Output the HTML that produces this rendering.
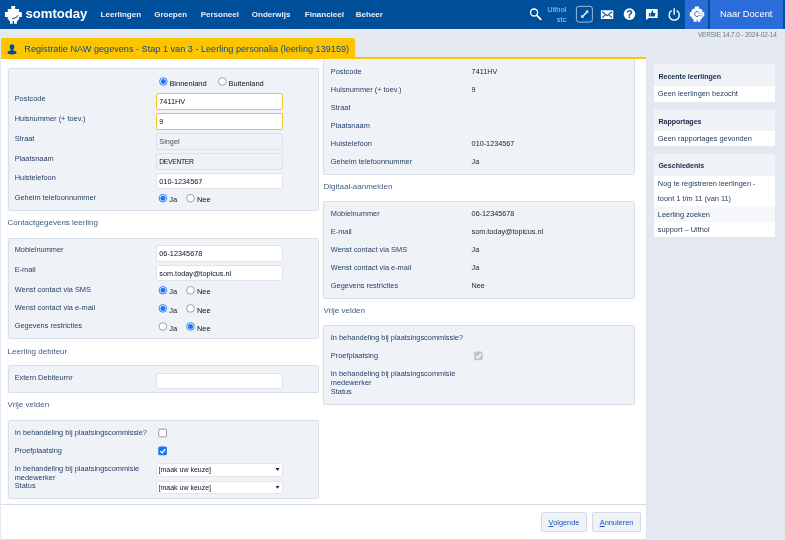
<!DOCTYPE html>
<html lang="nl">
<head>
<meta charset="utf-8">
<title>Somtoday - Registratie NAW gegevens</title>
<style>
*{box-sizing:border-box;margin:0;padding:0}
html,body{width:785px;height:540px;overflow:hidden}
body{will-change:transform;background:#e4e8f0;font-family:"Liberation Sans",sans-serif;color:#2b4468;position:relative;font-size:7.4px;-webkit-text-size-adjust:none}
#hdr{position:absolute;left:0;top:0;width:785px;height:28.5px;background:#004f9a}
#hdr .nav{position:absolute;top:9.5px;font-size:8px;font-weight:bold;color:#e8eef8;line-height:9px;white-space:nowrap}
#brand{position:absolute;left:25.5px;top:5.5px;font-size:13.1px;font-weight:bold;color:#fff;line-height:15px;letter-spacing:0}
#light{position:absolute;left:685px;top:0;width:98px;height:28.5px;background:#2a6cd8}
#sep{position:absolute;left:708px;top:0;width:1.6px;height:28.5px;background:#004f9a}
#naar{position:absolute;left:720px;top:8.900px;font-size:9.35px;color:#fff;line-height:11px;white-space:nowrap}
#user{position:absolute;left:516px;width:50.4px;top:5.400px;text-align:right;font-size:7.5px;line-height:9.300px;color:#aec4e8}
#versie{position:absolute;right:8.400px;top:31.200px;font-size:6.500px;letter-spacing:-0.156px;line-height:7px;color:#6b7a8d;white-space:nowrap}
#main{position:absolute;left:1px;top:58px;width:646px;height:482px;background:#fff;border-bottom:1px solid #d9dfe8;border-right:1px solid #dde2eb}
#yline{z-index:5;position:absolute;left:1px;top:57px;width:645px;height:2px;background:#fcc40a}
#tab{z-index:6;position:absolute;left:1px;top:38px;width:354.200px;height:21px;background:#fdc500;border-radius:2px 2px 0 0}
#tab span{position:absolute;left:23.3px;top:6.300px;font-size:9.150px;line-height:10px;color:#0a4a98;white-space:nowrap}
.panel{position:absolute;background:#eff2f6;border:1px solid #d8dfe8;border-radius:1.500px}
.h{position:absolute;font-size:8px;line-height:9px;color:#3f5d84;white-space:nowrap}
.l{position:absolute;font-size:7.4px;line-height:9px;color:#26406a;white-space:nowrap}
.v{position:absolute;font-size:7.250px;line-height:9px;color:#15202e;white-space:nowrap}
.in{position:absolute;left:156px;width:127px;height:16.500px;background:#fff;border:1px solid #dfe4ec;border-radius:2px;font-size:7.300px;line-height:9px;color:#0b111b;padding:3.200px 0 0 2.300px;white-space:nowrap}
.in.y{border-color:#f9c02c}
.in.d{background:#eff2f6;border-color:#dde2ea}
.in.d.g{color:#4a4f57}
.in.u{font-size:6.800px;letter-spacing:-0.350px;padding-top:3.400px}
.rl{position:absolute;font-size:7.450px;line-height:9px;color:#0e1520;white-space:nowrap}
.sb{position:absolute;left:654px;width:121px;background:#fff}
.sb .t{position:absolute;left:0;top:0;width:100%;height:21.6px;background:#eff2f6}
.sb b,.sb span{position:absolute;left:3.8px;font-size:7.4px;line-height:9px;white-space:nowrap;color:#1d3557}
.sb b{left:4.400px;color:#15294a;font-size:7.050px}
.btn{position:absolute;top:512.3px;height:20.2px;background:#eff2f6;border:1px solid #d3dae5;border-radius:1.5px;font-size:7.4px;line-height:9px;color:#1a55b5;text-align:center;padding-top:5.2px}
.btn u{text-decoration-thickness:0.6px;text-underline-offset:0.8px}
.sel{position:absolute;left:156px;width:127px;height:13.900px;background:#fff;border:1px solid #e1e6ed;border-radius:2px;font-size:7px;line-height:9px;color:#0e1520;padding:1.500px 0 0 1.500px;white-space:nowrap}
.fsep{position:absolute;left:1px;top:504px;width:645px;height:1px;background:#d5dce7}
.sb .alt{position:absolute;left:0;width:100%;background:#f5f7fa}
</style>
</head>
<body>
<div id="hdr">
  <div id="brand">somtoday</div>
  <div class="nav" style="left:100.6px">Leerlingen</div>
  <div class="nav" style="left:154.2px">Groepen</div>
  <div class="nav" style="left:200.7px">Personeel</div>
  <div class="nav" style="left:251.8px">Onderwijs</div>
  <div class="nav" style="left:304.8px">Financieel</div>
  <div class="nav" style="left:355.8px">Beheer</div>
  <div id="user">Uithol<br>stc</div>
  <div id="light"></div><div id="sep"></div>
  <div id="naar">Naar Docent</div>
<svg id="ico" width="785" height="29" viewBox="0 0 785 29" style="position:absolute;left:0;top:0">
  <!-- logo -->
  <path fill="#fff" d="M11.300 6h3.800v2.900h4v3.100h2.700v4.900h-2.700v2.900h-1.300v1.300h-.9v2.700h-2.900v-2.700h-1.300v2.700h-2.700v-2.700h-.9v-1.300h-1.300v-2.900h-2.900v-4.900h2.900v-3.100h3.500z"/>
  <path d="M12 18.600c2.800-.3 5-1.500 6.400-3.500c-1.200 2.400-3.600 3.900-6.400 3.500z" fill="#004f9a" stroke="#004f9a" stroke-width="0.5"/>
  <!-- search -->
  <circle cx="534.1" cy="12.5" r="3.55" fill="none" stroke="#fff" stroke-width="1.35"/>
  <path d="M536.800 15.3l4 4" stroke="#fff" stroke-width="1.800" stroke-linecap="round"/>
  <!-- expand -->
  <rect x="576.4" y="6.3" width="16" height="15.800" rx="2.6" fill="none" stroke="#c9d6ec" stroke-width="0.8"/>
  <path d="M582.500 16.400l4.200-4.200" stroke="#fff" stroke-width="1.400"/>
  <path fill="#fff" d="M588.200 10.600v2.900l-2.900-2.900zM581.200 17.700v-2.900l2.900 2.900z"/>
  <!-- mail -->
  <rect x="600.9" y="10.200" width="12.400" height="8.700" rx="0.600" fill="#fff"/>
  <path d="M602.200 11.700l4.900 3.900 4.900-3.900M602.200 17.700l3.500-3M612 17.700l-3.500-3" fill="none" stroke="#004f9a" stroke-width="1.100"/>
  <!-- help -->
  <circle cx="629.5" cy="14.150" r="5.800" fill="#fff"/>
  <text x="629.5" y="18" text-anchor="middle" font-family="Liberation Sans, sans-serif" font-weight="bold" font-size="10.800" fill="#004f9a">?</text>
  <!-- feedback -->
  <path fill="#fff" d="M646.600 9h10.500a.600.600 0 0 1 .6.600v7.900a.600.600 0 0 1-.6.600h-8.300l-2.800 2v-10.500a.600.600 0 0 1 .6-.600z"/>
  <path fill="#004f9a" d="M648.900 13h1.500v3.600h-1.500zM650.900 13l1.500-2.400c.8 0 1 .6.800 1.300l-.2 1h1.700c.5 0 .8.400.7.900l-.5 2.200c-.1.400-.4.600-.8.600h-3.200z"/>
  <!-- power -->
  <path d="M671.300 10.900a5.100 5.100 0 1 0 5.800 0" fill="none" stroke="#fff" stroke-width="1.300" stroke-linecap="round"/>
  <path d="M674.200 8.800v5.500" stroke="#fff" stroke-width="1.400" stroke-linecap="round"/>
  <!-- puzzle 2 -->
  <path fill="#fff" d="M694.800 6.500h4.200v2.300h1.900l1.500 1.500v1.600h1.800v4.500h-1.800v1.700l-1.500 1.500h-.6v2.200h-2.700v-2.100h-.9v2.100h-3.100v-2.200h-.4l-1.500-1.500v-1.700h-1.900v-4.500h1.900v-1.600l1.500-1.500h1.600z"/>
  <path d="M698.700 12.300a2.400 2.400 0 1 0 0 3.500" fill="none" stroke="#2a6cd8" stroke-width="1"/>
  <path d="M698.300 13.300h5.400M698.300 15.200h4.600" stroke="#2a6cd8" stroke-width="0.5"/>
  <path d="M696.900 14.200h7.200" stroke="#fff" stroke-width="1.200"/>
  <!-- person -->
</svg>
</div>
<div style="position:absolute;left:0;top:29px;width:785px;height:1px;background:#eef0f3"></div>
<div id="versie">VERSIE 14.7.0 - 2024-02-14</div>
<div id="main"></div>
<div id="yline"></div>
<div id="tab"><svg width="10" height="11" viewBox="0 0 10 11" style="position:absolute;left:5.900px;top:6px"><ellipse cx="5" cy="3" rx="2.300" ry="2.800" fill="#0a4a98"/><path fill="#0a4a98" d="M3.900 5h2.200v1.300c2 .5 3.500 1.200 3.500 2.500 0 1.200-2.200 1.700-4.600 1.700s-4.600-.5-4.600-1.700c0-1.300 1.500-2 3.500-2.500z"/></svg><span>Registratie NAW gegevens - Stap 1 van 3 - Leerling personalia (leerling 139159)</span></div>
<!--GEN-->
<div class="panel" style="left:8px;top:68px;width:311px;height:143px"></div>
<div class="rl" style="left:169.4px;top:78.6px">Binnenland</div>
<div class="rl" style="left:228.6px;top:78.6px">Buitenland</div>
<div class="l" style="left:14.7px;top:93.8px">Postcode</div>
<div class="in y" style="top:93px">7411HV</div>
<div class="l" style="left:14.7px;top:113.6px">Huisnummer (+ toev.)</div>
<div class="in y" style="top:113.1px">9</div>
<div class="l" style="left:14.7px;top:134.2px">Straat</div>
<div class="in d g" style="top:133.1px">Singel</div>
<div class="l" style="left:14.7px;top:153.9px">Plaatsnaam</div>
<div class="in d u" style="top:153.1px">DEVENTER</div>
<div class="l" style="left:14.7px;top:172.8px">Huistelefoon</div>
<div class="in " style="top:172.6px">010-1234567</div>
<div class="l" style="left:14.7px;top:192.6px">Geheim telefoonnummer</div>
<div class="rl" style="left:169.3px;top:195.3px">Ja</div>
<div class="rl" style="left:196.9px;top:195.3px">Nee</div>
<div class="h" style="left:7.6px;top:218.2px">Contactgegevens leerling</div>
<div class="panel" style="left:8px;top:238px;width:311px;height:101px"></div>
<div class="l" style="left:14.7px;top:245.2px">Mobielnummer</div>
<div class="in " style="top:245.3px">06-12345678</div>
<div class="l" style="left:14.7px;top:265.3px">E-mail</div>
<div class="in " style="top:264.9px">som.today@topicus.nl</div>
<div class="l" style="left:14.7px;top:284.7px">Wenst contact via SMS</div>
<div class="rl" style="left:169.3px;top:287.4px">Ja</div>
<div class="rl" style="left:196.9px;top:287.4px">Nee</div>
<div class="l" style="left:14.7px;top:302.7px">Wenst contact via e-mail</div>
<div class="rl" style="left:169.3px;top:305.5px">Ja</div>
<div class="rl" style="left:196.9px;top:305.5px">Nee</div>
<div class="l" style="left:14.7px;top:320.8px">Gegevens restricties</div>
<div class="rl" style="left:169.3px;top:323.6px">Ja</div>
<div class="rl" style="left:196.9px;top:323.6px">Nee</div>
<div class="h" style="left:7.6px;top:346.8px">Leerling debiteur</div>
<div class="panel" style="left:8px;top:365px;width:311px;height:28px"></div>
<div class="l" style="left:14.7px;top:373.4px">Extern Debiteurnr</div>
<div class="in " style="top:372.7px"></div>
<div class="h" style="left:7.6px;top:400.4px">Vrije velden</div>
<div class="panel" style="left:8px;top:420px;width:311px;height:79px"></div>
<div class="l" style="left:14.7px;top:427.9px">In behandeling bij plaatsingscommissie?</div>
<div class="l" style="left:14.7px;top:445.5px">Proefplaatsing</div>
<div class="l" style="left:14.7px;top:463.6px">In behandeling bij plaatsingscommisie</div>
<div class="l" style="left:14.7px;top:472.8px">medewerker</div>
<div class="l" style="left:14.7px;top:481.2px">Status</div>
<div class="sel" style="top:462.7px">[maak uw keuze]</div>
<div class="sel" style="top:480.5px">[maak uw keuze]</div>
<div class="panel" style="left:323px;top:57px;width:312px;height:118px"></div>
<div class="l" style="left:330.8px;top:66.6px">Postcode</div>
<div class="v" style="left:471.6px;top:67.3px">7411HV</div>
<div class="l" style="left:330.8px;top:84.5px">Huisnummer (+ toev.)</div>
<div class="v" style="left:471.6px;top:85.2px">9</div>
<div class="l" style="left:330.8px;top:102.9px">Straat</div>
<div class="l" style="left:330.8px;top:120.8px">Plaatsnaam</div>
<div class="l" style="left:330.8px;top:138.7px">Huistelefoon</div>
<div class="v" style="left:471.6px;top:139.4px">010-1234567</div>
<div class="l" style="left:330.8px;top:156.7px">Geheim telefoonnummer</div>
<div class="v" style="left:471.6px;top:157.4px">Ja</div>
<div class="h" style="left:323.5px;top:182.3px">Digitaal-aanmelden</div>
<div class="panel" style="left:323px;top:201px;width:312px;height:98px"></div>
<div class="l" style="left:330.8px;top:208.8px">Mobielnummer</div>
<div class="v" style="left:471.6px;top:209.0px">06-12345678</div>
<div class="l" style="left:330.8px;top:226.7px">E-mail</div>
<div class="v" style="left:471.6px;top:227.4px">som.today@topicus.nl</div>
<div class="l" style="left:330.8px;top:244.6px">Wenst contact via SMS</div>
<div class="v" style="left:471.6px;top:245.3px">Ja</div>
<div class="l" style="left:330.8px;top:262.5px">Wenst contact via e-mail</div>
<div class="v" style="left:471.6px;top:263.2px">Ja</div>
<div class="l" style="left:330.8px;top:280.5px">Gegevens restricties</div>
<div class="v" style="left:471.6px;top:281.2px">Nee</div>
<div class="h" style="left:323.5px;top:306.2px">Vrije velden</div>
<div class="panel" style="left:323px;top:325px;width:312px;height:80px"></div>
<div class="l" style="left:330.8px;top:333.0px">In behandeling bij plaatsingscommissie?</div>
<div class="l" style="left:330.8px;top:351.3px">Proefplaatsing</div>
<div class="l" style="left:330.8px;top:368.8px">In behandeling bij plaatsingscommisie</div>
<div class="l" style="left:330.8px;top:378.0px">medewerker</div>
<div class="l" style="left:330.8px;top:387.2px">Status</div>
<div class="fsep"></div>
<div class="btn" style="left:541.2px;width:45.7px"><u>V</u>olgende</div>
<div class="btn" style="left:592.3px;width:48.5px"><u>A</u>nnuleren</div>
<div class="sb" style="top:64px;height:37.5px"><div class="t"></div><b style="top:8.0px">Recente leerlingen</b><span style="top:25.1px">Geen leerlingen bezocht</span></div>
<div class="sb" style="top:109px;height:37.2px"><div class="t"></div><b style="top:7.7px">Rapportages</b><span style="top:25.2px">Geen rapportages gevonden</span></div>
<div class="sb" style="top:154px;height:83.3px"><div class="t"></div><b style="top:7.1px">Geschiedenis</b><span style="top:25.2px">Nog te registreren leerlingen -</span><span style="top:40.0px">toont 1 t/m 11 (van 11)</span><div class="alt" style="top:52.4px;height:15.4px"></div><span style="top:55.5px">Leerling zoeken</span><span style="top:70.6px">support – Uithol</span></div>
<svg width="785" height="540" viewBox="0 0 785 540" style="position:absolute;left:0;top:0;pointer-events:none"><circle cx="163.4" cy="81.5" r="3.8" fill="#fff" stroke="#1b74f2" stroke-width="0.9"/><circle cx="163.4" cy="81.5" r="2.5" fill="#1b74f2"/><circle cx="222.4" cy="81.5" r="3.85" fill="#fff" stroke="#868b94" stroke-width="0.8"/><circle cx="162.9" cy="198.2" r="3.8" fill="#fff" stroke="#1b74f2" stroke-width="0.9"/><circle cx="162.9" cy="198.2" r="2.5" fill="#1b74f2"/><circle cx="190.5" cy="198.2" r="3.85" fill="#fff" stroke="#868b94" stroke-width="0.8"/><circle cx="162.9" cy="290.3" r="3.8" fill="#fff" stroke="#1b74f2" stroke-width="0.9"/><circle cx="162.9" cy="290.3" r="2.5" fill="#1b74f2"/><circle cx="190.5" cy="290.3" r="3.85" fill="#fff" stroke="#868b94" stroke-width="0.8"/><circle cx="162.9" cy="308.4" r="3.8" fill="#fff" stroke="#1b74f2" stroke-width="0.9"/><circle cx="162.9" cy="308.4" r="2.5" fill="#1b74f2"/><circle cx="190.5" cy="308.4" r="3.85" fill="#fff" stroke="#868b94" stroke-width="0.8"/><circle cx="162.9" cy="326.45" r="3.85" fill="#fff" stroke="#868b94" stroke-width="0.8"/><circle cx="190.5" cy="326.45" r="3.8" fill="#fff" stroke="#1b74f2" stroke-width="0.9"/><circle cx="190.5" cy="326.45" r="2.5" fill="#1b74f2"/><rect x="158.70000000000002" y="429.09999999999997" width="7.8" height="7.8" rx="1.3" fill="#fff" stroke="#7b8089" stroke-width="0.8"/><rect x="158.3" y="446.6" width="8.6" height="8.6" rx="1.5" fill="#1b74f2"/><path d="M160.3 451.1l1.8 1.8 3-3.8" fill="none" stroke="#fff" stroke-width="1.3"/><path fill="#222" d="M275.6 468.1h3.8l-1.900 2.900zM275.600 485.900h3.800l-1.900 2.900z"/><rect x="474.1" y="351.6" width="8.6" height="8.6" rx="1.5" fill="#c3c7cd"/><path d="M476.1 356.1l1.8 1.8 3-3.8" fill="none" stroke="#fff" stroke-width="1.3"/></svg>
<!--/GEN-->
</body>
</html>
